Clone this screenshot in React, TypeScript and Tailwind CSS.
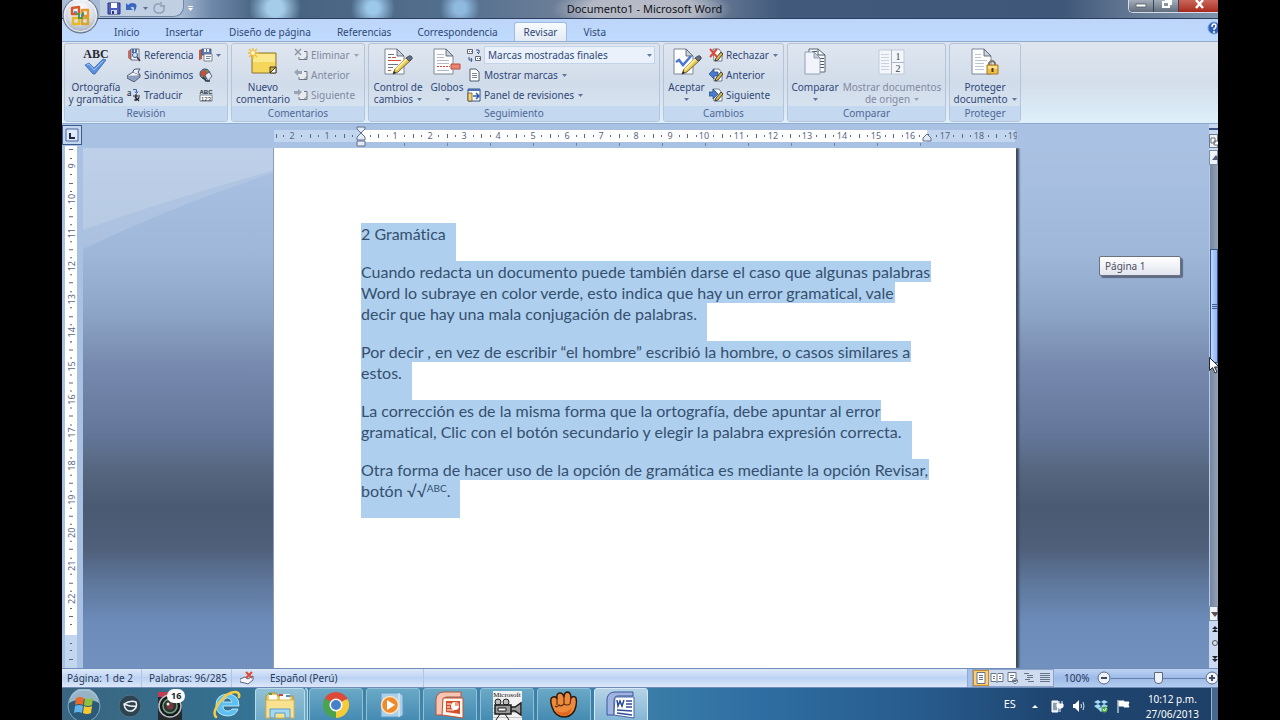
import React from 'react';
import clsx from 'clsx';

const TABS = ['Inicio', 'Insertar', 'Diseño de página', 'Referencias', 'Correspondencia', 'Revisar', 'Vista'];

const PARAGRAPHS = [
  ['2 Gramática'],
  [
    'Cuando redacta un documento puede también darse el caso que algunas palabras',
    'Word lo subraye en color verde, esto indica que hay un error gramatical, vale',
    'decir que hay una mala conjugación de palabras.',
  ],
  ['Por decir , en vez de escribir “el hombre” escribió la hombre, o casos similares a', 'estos.'],
  [
    'La corrección es de la misma forma que la ortografía, debe apuntar al error',
    'gramatical, Clic con el botón secundario y elegir la palabra expresión correcta.',
  ],
  ['Otra forma de hacer uso de la opción de gramática es mediante la opción Revisar,', 'botón √√'],
];

function Caret({ className }: { className?: string }) {
  return (
    <svg viewBox="0 0 5 3" className={clsx('inline-block w-[5px] h-[3px] shrink-0', className)}>
      <path d="M0 0h5L2.5 3z" fill="currentColor" />
    </svg>
  );
}

function Icon({ size = 14, children }: { size?: number; children: React.ReactNode }) {
  return (
    <svg width={size} height={size} viewBox={`0 0 ${size} ${size}`} className="shrink-0">
      {children}
    </svg>
  );
}

/* ---------- ribbon drawings ---------- */

function Sheet({ x = 2, y = 1, w = 19, h = 25 }: { x?: number; y?: number; w?: number; h?: number }) {
  return (
    <g>
      <path d={`M${x} ${y}h${w - 7}l7 7v${h - 7}h-${w}z`} fill="#fdfdfe" stroke="#7c8696" />
      <path d={`M${x + w - 7} ${y}v7h7z`} fill="#c9d2df" stroke="#4f5866" strokeWidth=".8" />
    </g>
  );
}

function Pencil() {
  return (
    <g>
      <path d="M10 26l2-5L24 9l4 3-13 12z" fill="#e6c84e" stroke="#5d5540" strokeWidth=".9" />
      <path d="M12 21l12-12 1.500 1.200L13.500 22.500z" fill="#fff0a0" />
      <path d="M23 10l3-2q2-1 3 1t-1 3l-2 1z" fill="#667086" stroke="#39404e" strokeWidth=".8" />
      <path d="M10 26l1-3 2 2z" fill="#222" />
    </g>
  );
}

const SpellingIcon = () => (
  <svg width="30" height="28" viewBox="0 0 30 28">
    <text x="15" y="10" textAnchor="middle" fontSize="12" fontWeight="bold" fontFamily="Liberation Serif, serif" fill="#262a33">
      ABC
    </text>
    <path d="M4 17l4-2 5 5L22 11l3 1-11 14h-2z" fill="#5b8fe0" stroke="#3a68b4" strokeWidth=".8" />
    <path d="M6 17l2-1 5 6 9-9" fill="none" stroke="#a5c6f6" />
  </svg>
);

const NoteIcon = () => (
  <svg width="30" height="28" viewBox="0 0 30 28">
    <path d="M4 5h24v20H4z" fill="#f4d75a" stroke="#8c7430" />
    <path d="M5 6h22v8H5z" fill="#fbe88a" />
    <path d="M28 19v6h-6z" fill="#fff" stroke="#3d3620" />
    <path d="M22 19h6l-6 6z" fill="#d2b23c" stroke="#3d3620" />
    <path d="M5 0v11M0 5h11M1 1l8 8M9 1L1 9" stroke="#f3b932" strokeWidth="1.400" />
    <circle cx="5" cy="5" r="2" fill="#fff7c0" />
  </svg>
);

const TrackIcon = () => (
  <svg width="30" height="28" viewBox="0 0 30 28">
    <Sheet />
    <path d="M5 6.500h6M5 9.500h3M5 16.500h10M5 19.500h5" stroke="#6b7686" />
    <path d="M5 12.500h13M9 9.500h4M5 22.500h3" stroke="#d0503c" />
    <Pencil />
  </svg>
);

const BalloonIcon = () => (
  <svg width="30" height="28" viewBox="0 0 30 28">
    <Sheet />
    <path d="M5 6.500h7M5 9.500h7M5 12.500h12M5 15.500h12M5 22.500h12" stroke="#b3bbc8" />
    <path d="M5 18.500h13" stroke="#cc4b3c" strokeDasharray="2 1" />
    <path d="M19 16h9v5h-9z" fill="#ea8574" stroke="#bd4c3c" />
  </svg>
);

const AcceptIcon = () => (
  <svg width="30" height="28" viewBox="0 0 30 28">
    <Sheet />
    <path d="M4 14l3-2 4 5 8-9" fill="none" stroke="#4a78d0" strokeWidth="2.500" />
    <Pencil />
  </svg>
);

const CompareIcon = () => (
  <svg width="30" height="28" viewBox="0 0 30 28">
    <path d="M9 1h9l7 6v17H9z" fill="#f8fafc" stroke="#5b6675" />
    <path d="M18 1v6h7M12 3.500h5M20 10.500h4M20 13.500h4M20 16.500h4M20 19.500h4" fill="none" stroke="#4b5563" />
    <path d="M5 4h9l6 6v16H5z" fill="#f1f5fb" stroke="#93a0b5" />
    <path d="M14 4v6h6z" fill="#c4cfdf" stroke="#8290a6" strokeWidth=".8" />
  </svg>
);

const SourceDocsIcon = () => (
  <svg width="30" height="28" viewBox="0 0 30 28">
    <path d="M2 2h25v24H2z" fill="#f3f6fa" stroke="#c2cbd8" />
    <path d="M14.500 2v24M14 14.500h13" stroke="#a9b4c4" />
    <path d="M4 6.500h8M4 9.500h8M4 12.500h8M4 15.500h8M4 18.500h8M4 21.500h8" stroke="#c9d1dd" />
    <text x="21" y="12" textAnchor="middle" fontSize="10" fontFamily="Liberation Serif, serif" fill="#3d4552">
      1
    </text>
    <text x="21" y="24" textAnchor="middle" fontSize="10" fontFamily="Liberation Serif, serif" fill="#3d4552">
      2
    </text>
  </svg>
);

const ProtectIcon = () => (
  <svg width="30" height="28" viewBox="0 0 30 28">
    <Sheet />
    <path d="M5 6.500h6M5 9.500h6M5 12.500h12M5 15.500h9M5 18.500h9M5 21.500h9" stroke="#bdc5d1" />
    <path d="M19 18v-3q3-4 6 0v3" fill="none" stroke="#7c7868" strokeWidth="2" />
    <path d="M17 17h11v9H17z" fill="#efbf45" stroke="#a5762a" />
    <path d="M18 18h9v3h-9z" fill="#fbe08a" />
    <path d="M21.500 20h2v4h-2z" fill="#4e3a12" />
  </svg>
);

const ResearchIcon = () => (
  <Icon>
    <path d="M1 3l3-2v11l-3-2z" fill="#c86b5e" />
    <path d="M4 1h8v11H4z" fill="#f2f5fa" stroke="#46536b" strokeWidth=".8" />
    <path d="M5 1h2v4H5zM8 1h2v3H8z" fill="#4a6fb4" />
    <circle cx="8" cy="7" r="2.500" fill="#cfe4fb" stroke="#3c5a90" />
    <path d="M10 9l3 4" stroke="#3d3d45" strokeWidth="1.500" />
  </Icon>
);

const ThesaurusIcon = () => (
  <Icon>
    <path d="M0 8l6-4 7 3-6 5z" fill="#f7f9fc" stroke="#3a4560" strokeWidth=".9" />
    <path d="M0 8v2l7 4 6-5V7" fill="#8ea2c4" stroke="#3a4560" strokeWidth=".8" />
    <path d="M6 4q0-3 3-3h4L11 4l2 3" fill="#e7eefa" stroke="#3a4560" strokeWidth=".9" />
    <path d="M3 8l5 2" stroke="#8995ab" />
  </Icon>
);

const TranslateIcon = () => (
  <Icon>
    <text x="0" y="8" fontSize="10" fontFamily="Liberation Serif, serif" fill="#16203a">
      a
    </text>
    <path d="M6 1.500h3.500v3M8 3.500l1.500 2 1.500-2" fill="none" stroke="#3864b0" />
    <path d="M6 8h7M9 6v7M7 12q5 0 5-3M8 9l4 4" fill="none" stroke="#22252d" strokeWidth="1.200" />
  </Icon>
);

const TipIcon = () => (
  <Icon>
    <path d="M0 2l3-1v10l-3 1z" fill="#b5604f" />
    <path d="M3 1h9v6H3z" fill="#5a7cba" stroke="#44506a" strokeWidth=".8" />
    <path d="M5 1h2v3H5zM8 1h2v3H8z" fill="#edf2fb" />
    <path d="M5 6h8v7H5z" fill="#fbfcfe" stroke="#5d6a80" strokeWidth=".8" />
    <path d="M7 8.500h5M7 10.500h4" stroke="#7a879b" />
  </Icon>
);

const LanguageIcon = () => (
  <Icon>
    <circle cx="6" cy="6" r="5" fill="#5d9a6a" stroke="#33506e" />
    <path d="M2 4q4-4 6 0t-4 5q-3-1-2-5z" fill="#c94f3d" />
    <path d="M6 7l4-3 3 4-4 5z" fill="#e6edf8" stroke="#3d4a64" strokeWidth=".8" />
    <path d="M4 9l3 4h4" fill="none" stroke="#2c3444" strokeWidth="1.500" />
  </Icon>
);

const CountIcon = () => (
  <Icon>
    <text x="7" y="6" textAnchor="middle" fontSize="6" fontWeight="bold" fontFamily="Liberation Sans, sans-serif" fill="#22262e">
      ABC
    </text>
    <path d="M1 7h12v6H1z" fill="#fff" stroke="#5c6676" strokeWidth=".8" />
    <text x="7" y="13" textAnchor="middle" fontSize="6" fontFamily="Liberation Sans, sans-serif" fill="#22262e">
      123
    </text>
  </Icon>
);

function CommentIcon({ kind }: { kind: 'delete' | 'prev' | 'next' }) {
  return (
    <Icon>
      <path d="M5 3h8v9H5z" fill="#e8ebf0" />
      <path d="M10 3.500h3v8H5V9" fill="none" stroke="#6e7683" />
      <path d="M10 11.500l3-3" stroke="#6e7683" />
      {kind === 'delete' && <path d="M1 1l6 6M7 1L1 7" stroke="#8f97a4" strokeWidth="1.500" />}
      {kind === 'prev' && <path d="M0 4l4-3v2h4v3H4v2z" fill="#9aa3b1" />}
      {kind === 'next' && <path d="M8 4L4 1v2H0v3h4v2z" fill="#9aa3b1" />}
    </Icon>
  );
}

const MarkupViewIcon = () => (
  <Icon>
    <path d="M.5 1.500h5v4h-5zM8.500 8.500h5v4h-5z" fill="#fff" stroke="#5c6679" />
    <path d="M2 3.500h1M4 3.500h1M10 10.500h1M12 10.500h1" stroke="#5c6679" />
    <path d="M9 2h3v3M10 4l2 2M2 9v3h3M4 10l1 2-1 2" fill="none" stroke="#35508a" />
  </Icon>
);

const ShowMarkupIcon = () => (
  <Icon>
    <path d="M3 1h6l3 3v9H3z" fill="#fff" stroke="#4f5a6c" />
    <path d="M5 5.500h5M5 7.500h5M5 9.500h5" stroke="#7b8799" />
  </Icon>
);

const PaneIcon = () => (
  <Icon>
    <path d="M1 1h12v12H1z" fill="#fff" stroke="#33507f" />
    <path d="M1 1h12v2H1z" fill="#4a6fb4" />
    <path d="M1 5h4v8H1z" fill="#f1d370" stroke="#6b5a2a" strokeWidth=".8" />
    <path d="M6 8h5M9 5l3 3-3 3" fill="none" stroke="#2e5db0" strokeWidth="1.500" />
  </Icon>
);

function ChangeIcon({ kind }: { kind: 'reject' | 'prev' | 'next' }) {
  return (
    <Icon>
      <path d="M4 1h6l3 4v8H5z" fill="#f8fafc" stroke="#596477" strokeWidth=".8" />
      <path d="M6 13l1-3 5-6 2 2-5 6z" fill="#d9b64a" stroke="#37332a" strokeWidth=".9" />
      {kind === 'reject' && <path d="M1 1l7 8M8 1L1 9" stroke="#d94a3c" strokeWidth="2" />}
      {kind === 'prev' && <path d="M0 6l5-5v3h4v4H5v3z" fill="#4a7ccc" stroke="#2c508e" strokeWidth=".8" />}
      {kind === 'next' && <path d="M9 6L4 1v3H0v4h4v3z" fill="#4a7ccc" stroke="#2c508e" strokeWidth=".8" />}
    </Icon>
  );
}

/* ---------- ribbon building blocks ---------- */

function Group({ title, className, children }: { title: string; className: string; children: React.ReactNode }) {
  return (
    <section
      className={clsx(
        'flex flex-col shrink-0 rounded-[3px] border border-[#b4c4da] bg-linear-to-b from-[#dfe6f0] via-[#d1dcea] to-[#dbe6f3] overflow-hidden',
        className,
      )}
    >
      <div className="flex flex-1 pt-px">{children}</div>
      <h2 className="h-[15px] bg-[#c4d8f0] text-center leading-[15px] text-[#4f6894]">{title}</h2>
    </section>
  );
}

function BigButton({ icon, lines, caret, disabled, className }: {
  icon: React.ReactNode;
  lines: string[];
  caret?: boolean;
  disabled?: boolean;
  className: string;
}) {
  return (
    <button
      disabled={disabled}
      className={clsx('flex flex-col items-center shrink-0 pt-[3px] leading-[12px] whitespace-nowrap', disabled && 'text-[#8189a0]', className)}
    >
      <span className="mb-[5px]">{icon}</span>
      <span>{lines[0]}</span>
      <span className="flex h-3 items-center gap-1">
        {lines[1]}
        {caret && <Caret className="opacity-70" />}
      </span>
    </button>
  );
}

function SmallButton({ icon, label, caret, disabled }: {
  icon: React.ReactNode;
  label: string;
  caret?: boolean;
  disabled?: boolean;
}) {
  return (
    <button disabled={disabled} className={clsx('flex h-5 items-center gap-[3px] whitespace-nowrap', disabled && 'text-[#8189a0]')}>
      {icon}
      <span>{label}</span>
      {caret && <Caret className="ml-px opacity-70" />}
    </button>
  );
}

function Ribbon() {
  return (
    <div className="flex h-[83px] shrink-0 gap-[3px] border-y border-[#8fabd0] bg-linear-to-b from-[#dfe5ee] via-[#d3deea] to-[#def0fb] p-px pl-[2px]">
      <Group title="Revisión" className="w-[164px]">
        <BigButton icon={<SpellingIcon />} lines={['Ortografía', 'y gramática']} className="w-[62px]" />
        <div className="flex w-[72px] flex-col">
          <SmallButton icon={<ResearchIcon />} label="Referencia" />
          <SmallButton icon={<ThesaurusIcon />} label="Sinónimos" />
          <SmallButton icon={<TranslateIcon />} label="Traducir" />
        </div>
        <div className="flex flex-col">
          <button aria-label="Sugerencia de traducción" className="flex h-5 items-center gap-[3px]">
            <TipIcon />
            <Caret className="opacity-70" />
          </button>
          <button aria-label="Establecer idioma" className="flex h-5 items-center">
            <LanguageIcon />
          </button>
          <button aria-label="Contar palabras" className="flex h-5 items-center">
            <CountIcon />
          </button>
        </div>
      </Group>

      <Group title="Comentarios" className="w-[134px]">
        <BigButton icon={<NoteIcon />} lines={['Nuevo', 'comentario']} className="w-[62px]" />
        <div className="flex flex-col">
          <SmallButton icon={<CommentIcon kind="delete" />} label="Eliminar" caret disabled />
          <SmallButton icon={<CommentIcon kind="prev" />} label="Anterior" disabled />
          <SmallButton icon={<CommentIcon kind="next" />} label="Siguiente" disabled />
        </div>
      </Group>

      <Group title="Seguimiento" className="w-[292px]">
        <BigButton icon={<TrackIcon />} lines={['Control de', 'cambios']} caret className="w-[58px]" />
        <BigButton icon={<BalloonIcon />} lines={['Globos']} caret className="w-[40px]" />
        <div className="flex flex-1 flex-col">
          <div className="flex h-5 items-center gap-[3px] pr-1">
            <MarkupViewIcon />
            <div className="relative flex-1">
              <select
                aria-label="Mostrar para revisión"
                className="h-[18px] w-full appearance-none border border-[#c3d3e8] bg-[#eaf1fa] pl-[3px] outline-none"
              >
                <option>Marcas mostradas finales</option>
                <option>Final</option>
                <option>Original</option>
              </select>
              <Caret className="pointer-events-none absolute right-[3px] top-2 opacity-70" />
            </div>
          </div>
          <SmallButton icon={<ShowMarkupIcon />} label="Mostrar marcas" caret />
          <SmallButton icon={<PaneIcon />} label="Panel de revisiones" caret />
        </div>
      </Group>

      <Group title="Cambios" className="w-[121px]">
        <BigButton icon={<AcceptIcon />} lines={['Aceptar']} caret className="w-[45px]" />
        <div className="flex flex-col">
          <SmallButton icon={<ChangeIcon kind="reject" />} label="Rechazar" caret />
          <SmallButton icon={<ChangeIcon kind="prev" />} label="Anterior" />
          <SmallButton icon={<ChangeIcon kind="next" />} label="Siguiente" />
        </div>
      </Group>

      <Group title="Comparar" className="w-[159px]">
        <BigButton icon={<CompareIcon />} lines={['Comparar']} caret className="w-[54px]" />
        <BigButton icon={<SourceDocsIcon />} lines={['Mostrar documentos', 'de origen']} caret disabled className="w-[100px]" />
      </Group>

      <Group title="Proteger" className="w-[72px]">
        <BigButton icon={<ProtectIcon />} lines={['Proteger', 'documento']} caret className="flex-1" />
      </Group>
    </div>
  );
}

/* ---------- title bar and tabs ---------- */

function OfficeButton() {
  return (
    <button aria-label="Botón de Office" className="absolute left-0 top-[-3px] z-10">
      <svg width="38" height="38" viewBox="0 0 38 38">
        <defs>
          <radialGradient id="orb" cx=".5" cy=".3" r=".75">
            <stop offset="0" stopColor="#ffffff" />
            <stop offset=".6" stopColor="#d4dae4" />
            <stop offset="1" stopColor="#8f9bb0" />
          </radialGradient>
        </defs>
        <circle cx="18.500" cy="18.500" r="17.500" fill="url(#orb)" stroke="#5f6d84" />
        <circle cx="18.500" cy="18.500" r="16" fill="none" stroke="#fff" strokeOpacity=".8" />
        <g fill="none" strokeWidth="2.500" strokeLinejoin="round">
          <path d="M10 11l7-1v7h-7z" stroke="#d9582a" />
          <path d="M20 13h6v6h-6z" stroke="#e9962c" />
          <path d="M11 21h6v6h-6z" stroke="#e9b92a" />
          <path d="M20 21h6v6h-6z" stroke="#d9a52c" />
        </g>
        <path d="M14 17h3v4h4M21 15v4" fill="none" stroke="#4f9a4c" strokeWidth="2" />
        <path d="M12 15h3M20 17v3" stroke="#3f78c4" strokeWidth="1.500" />
      </svg>
    </button>
  );
}

function TitleBar() {
  return (
    <header className="relative flex h-[19px] shrink-0 items-start border-b border-[#2c3f5e] bg-[radial-gradient(circle_at_213px_8px,#a5cdea_0,#a5cdea_8px,transparent_26px),radial-gradient(circle_at_311px_8px,#9cc8ea_0,#9cc8ea_6px,transparent_22px),radial-gradient(circle_at_398px_8px,#8fb9de_0,#8fb9de_6px,transparent_20px),radial-gradient(ellipse_90px_24px_at_580px_9px,#b9bcc8_0,#b3b8c5_60%,transparent),linear-gradient(to_right,#a9bdd6_0,#a5b8d0_120px,#6c87a8_150px,#46617f_200px,#54708f_400px,#6d7f98_500px,#6d7f98_640px,#41597b_720px,#3f5778_1000px,#5f7490_1060px,#7f93ad_100%)]">
      <div className="ml-[38px] flex h-[17px] w-[84px] items-center gap-1 rounded-br-[10px] border-b border-r border-[#7187a8] bg-[#c0cfe2] pl-[7px]">
        <button aria-label="Guardar">
          <Icon>
            <path d="M1 2h12v11H1z" fill="#4f5fc0" stroke="#2d3880" />
            <path d="M4 2h6v5H4z" fill="#fff" />
            <path d="M4 9h6v4H4z" fill="#cdd5ea" />
            <path d="M5 10h2v3H5z" fill="#2d3880" />
          </Icon>
        </button>
        <button aria-label="Deshacer" className="flex items-center gap-1">
          <Icon>
            <path d="M1 2v7h7L5.500 6.500Q10 4 9 11q6-9-2-9-2 0-4 2z" fill="#3a66c0" />
          </Icon>
          <Caret className="text-[#5b7096]" />
        </button>
        <button aria-label="Rehacer" disabled>
          <Icon>
            <path d="M8 3H5Q2 4 2 8t5 4 5-4V4M9 1v4h4" fill="none" stroke="#92a0b5" strokeWidth="1.500" />
          </Icon>
        </button>
      </div>
      <button aria-label="Personalizar barra de acceso rápido" className="ml-1 flex h-4 flex-col items-center justify-center gap-px text-white">
        <span className="h-px w-[5px] bg-white" />
        <Caret />
      </button>
      <h1 className="flex-1 pr-8 text-center text-[11px] leading-[18px] text-[#101318]">Documento1 - Microsoft Word</h1>
      <div className="flex h-[13px] w-[90px] overflow-hidden rounded-bl-[5px] border-b border-l border-[#d3deea]">
        <button aria-label="Minimizar" className="w-[25px] border-r border-[#35445a] bg-linear-to-b from-[#a4adb9] to-[#626d7d]">
          <svg width="24" height="12" viewBox="0 0 24 12">
            <path d="M7 4h10v3H7z" fill="#fff" stroke="#4a5361" strokeWidth=".8" />
          </svg>
        </button>
        <button aria-label="Restaurar" className="w-[25px] border-r border-[#35445a] bg-linear-to-b from-[#a4adb9] to-[#626d7d]">
          <svg width="24" height="12" viewBox="0 0 24 12">
            <path d="M9 2h6v5H9zM11 0h6v5" fill="none" stroke="#fff" strokeWidth="2" />
          </svg>
        </button>
        <button aria-label="Cerrar" className="flex-1 bg-linear-to-b from-[#c9665a] to-[#a8281c]">
          <svg width="39" height="12" viewBox="0 0 39 12">
            <path d="M17 0l7 8M24 0l-7 8" stroke="#fff" strokeWidth="2.500" />
          </svg>
        </button>
      </div>
    </header>
  );
}

function TabRow() {
  return (
    <nav className="flex h-[22px] shrink-0 items-end justify-between bg-linear-to-b from-[#bdd5f8] to-[#bfdbff]">
      <div className="flex gap-[6px] pl-[42px]">
        {TABS.map((tab) => (
          <button
            key={tab}
            className={clsx(
              'h-[19px] rounded-t-[3px] border border-b-0 px-[9px]',
              tab === 'Revisar' ? 'border-[#9dbbe0] bg-linear-to-b from-[#f7fafd] to-[#e3ebf5]' : 'border-transparent',
            )}
          >
            {tab}
          </button>
        ))}
      </div>
      <div className="w-[11px] self-center overflow-hidden">
        <button aria-label="Ayuda">
          <Icon>
            <circle cx="7" cy="7" r="6" fill="#2f62b8" stroke="#7fa3dc" />
            <path d="M5 6q0-3 2-3t2 2-2 3v1M7 10v2" fill="none" stroke="#fff" strokeWidth="1.500" />
          </Icon>
        </button>
      </div>
    </nav>
  );
}

/* ---------- rulers and scrollbar ---------- */

const RULER_ZERO = 89;
const units = Array.from({ length: 22 }, (_, i) => i - 2);
const at = (n: number) => Math.round(RULER_ZERO + (n * 103) / 3);

function HorizontalRuler() {
  return (
    <div className="flex shrink-0 justify-center pr-[3px]">
      <svg viewBox="0 0 745 24" className="h-6 w-[745px] shrink-0 text-[#5a6880]">
        <path d="M2 6h741v12H2z" fill="#c3d6f0" />
        <path d={`M${RULER_ZERO} 6h566v12h-566z`} fill="#fff" />
        <g fontSize="9" textAnchor="middle" fill="currentColor">
          {units.filter((n) => n !== 0).map((n) => (
            <text key={n} x={at(n)} y="15">{Math.abs(n)}</text>
          ))}
        </g>
        {units.filter((n) => n > -2).map((n) => (
          <path
            key={n}
            d={`M${at(n - 0.75)} 11v2M${at(n - 0.5)} 10v4M${at(n - 0.25)} 11v2`}
            transform="translate(.5 0)"
            stroke="currentColor"
          />
        ))}
        <path d="M4.500 10v4M11.500 11v2" stroke="currentColor" />
        <g stroke="#7184a2">
          {Array.from({ length: 13 }, (_, i) => (
            <path key={i} d={`M${132 + i * 43}.5 19v3`} />
          ))}
        </g>
        <path d="M85 3h8v2l-4 4-4-4zM89 9l4 4v3h-8v-3zM85 17h8v5h-8z" fill="#e3ebf6" stroke="#5e6f8c" />
        <path d="M655 10l4 4v3h-8v-3z" fill="#e3ebf6" stroke="#5e6f8c" />
      </svg>
    </div>
  );
}

function VerticalRuler() {
  const rows = Array.from({ length: 14 }, (_, i) => i + 9);
  const y = (n: number) => Math.round(20 + ((n - 9) * 133) / 4);
  return (
    <svg viewBox="0 0 21 521" preserveAspectRatio="xMidYMin slice" className="w-[21px] min-h-0 flex-1 text-[#5a6880]">
      <path d="M3 0h12v521H3z" fill="#c3d6f0" />
      <path d="M3 0h12v488H3z" fill="#fff" />
      {rows.map((n) => (
        <g key={n}>
          <text fontSize="9" textAnchor="middle" fill="currentColor" transform={`translate(13 ${y(n)}) rotate(-90)`}>
            {n}
          </text>
          <path d={`M8 ${y(n - 0.25)}.5h2M7 ${y(n - 0.5)}.5h4M8 ${y(n + 0.25)}.5h2`} stroke="currentColor" />
        </g>
      ))}
      <path d="M7 469.500h4M8 477.500h2M8 496.500h2M8 503.500h2M7 512.500h4" stroke="currentColor" />
    </svg>
  );
}

function ScrollColumn() {
  return (
    <div className="flex w-[9px] shrink-0 flex-col overflow-hidden bg-[#c8d9f0]">
      <div className="mt-1 h-[2px] shrink-0 bg-[#3a5688]" />
      <button aria-label="Ver regla" className="mt-1 h-[14px] shrink-0 border border-[#6c7b94] bg-[#eef0f2]">
        <svg width="14" height="12" viewBox="0 0 14 12">
          <path d="M1 3h4v5H1zM4 6h7v4H4z" fill="#fff" stroke="#656b76" />
        </svg>
      </button>
      <button aria-label="Subir" className="mt-[2px] h-[15px] shrink-0 border border-[#7b8daa] bg-[#eef3fa]">
        <svg width="14" height="13" viewBox="0 0 14 13">
          <path d="M2 9l4-5 4 5z" fill="#4d5c78" />
        </svg>
      </button>
      <div className="flex min-h-0 flex-1 flex-col border-l border-[#b6cbe8] bg-linear-to-r from-[#76869e] to-[#94a3b8]">
        <div className="h-[19%]" />
        <div className="relative flex h-[26%] flex-col items-end justify-center gap-px border border-[#36588f] bg-linear-to-r from-[#c0d7fb] to-[#8fb5f0]">
          <span className="h-px w-[5px] bg-[#3e5f96]" />
          <span className="h-px w-[5px] bg-[#3e5f96]" />
          <span className="h-px w-[5px] bg-[#3e5f96]" />
          <svg width="12" height="17" viewBox="0 0 12 17" className="absolute -bottom-3 left-[-2px]">
            <path d="M.5.5v13l3-3 2.500 5.500 2-1-2.500-5H10z" fill="#fff" stroke="#20252e" />
          </svg>
        </div>
      </div>
      <button aria-label="Bajar" className="h-[15px] shrink-0 border border-[#7b8daa] bg-[#eef3fa]">
        <svg width="14" height="13" viewBox="0 0 14 13">
          <path d="M1 5h8l-4 5z" fill="#5c4f55" />
        </svg>
      </button>
      <button aria-label="Página anterior" className="h-[15px] shrink-0">
        <svg width="12" height="15" viewBox="0 0 12 15">
          <path d="M3 8l3-3 3 3zM3 11l3-3 3 3z" fill="#1d2430" />
        </svg>
      </button>
      <button aria-label="Seleccionar objeto de búsqueda" className="h-[15px] shrink-0">
        <svg width="12" height="15" viewBox="0 0 12 15">
          <circle cx="6" cy="7" r="2.500" fill="#d5dbe3" stroke="#4e5765" />
        </svg>
      </button>
      <button aria-label="Página siguiente" className="h-[17px] shrink-0">
        <svg width="12" height="15" viewBox="0 0 12 15">
          <path d="M3 4h6L6 7zM3 7h6l-3 3z" fill="#1d2430" />
        </svg>
      </button>
    </div>
  );
}

/* ---------- document ---------- */

function DocumentArea() {
  return (
    <div className="relative flex min-h-0 flex-1 justify-center overflow-hidden bg-[linear-gradient(to_bottom,#aac1e2_0%,#9fb8da_20%,#8ea7c8_31%,#7789ae_42%,#64779a_55%,#56667f_62%,#4a5a72_69%,#505f7a_77%,#5d7599_83%,#6c8bb8_91%,#7291bf_100%)]">
      <svg width="192" height="104" viewBox="0 0 192 104" className="absolute left-0 top-0">
        <path d="M0 0h192v22Q90 50 0 82z" fill="#fff" opacity=".14" />
        <path d="M0 0h192v24Q90 58 0 101z" fill="#fff" opacity=".12" />
      </svg>
      <article className="relative mr-[3px] w-[743px] border-l border-[#8c9cb8] bg-white pl-[87px] pt-[75px] font-[Lato,'Noto_Sans',sans-serif] text-[16px] leading-[21px] text-[#35506e] shadow-[3px_0_2px_#3c4a60] [font-variant-ligatures:none]">
        {PARAGRAPHS.map((lines, p) => (
          <p key={p}>
            {lines.map((line, i) => (
              <span
                key={i}
                className={clsx('block w-fit whitespace-nowrap bg-[#afcfee]', i === lines.length - 1 ? 'pb-[17px] pr-[10px]' : 'pr-px')}
              >
                {line}
                {line === 'botón √√' && (
                  <>
                    <sup className="text-[10px] leading-none">ABC</sup>.
                  </>
                )}
              </span>
            ))}
          </p>
        ))}
      </article>
      <div
        role="tooltip"
        className="absolute right-[28px] top-[108px] h-5 w-[82px] rounded-[2px] border border-[#6b7280] bg-linear-to-b from-white to-[#e2e5f0] pl-[5px] leading-[18px] text-[#4a4f5c] shadow-[2px_2px_1px_#5c6a84]"
      >
        Página 1
      </div>
    </div>
  );
}

/* ---------- status bar ---------- */

const VIEWS = [
  { label: 'Diseño de impresión', d: 'M3 1h8v11H3zM5 4h4M5 6h4M5 8h4' },
  { label: 'Lectura de pantalla completa', d: 'M7 3v8M1 2h5l1 1 1-1h5v8H8l-1 1-1-1H1zM3 5h2M9 5h2M3 7h2M9 7h2' },
  { label: 'Diseño web', d: 'M2 1h8v9H2zM4 4h4M4 6h3M9 7a2.500 2.500 0 1 0 .1 0zM7 9h5' },
  { label: 'Esquema', d: 'M2 2h5M5 4h6M5 6h6M3 8h5M6 10h6' },
  { label: 'Borrador', d: 'M2 2h10M2 4h10M2 6h10M2 8h10M2 10h10' },
];

function StatusBar() {
  return (
    <footer className="flex h-[20px] shrink-0 items-center border-y border-[#6f8db8] bg-linear-to-b from-[#dfeaf9] via-[#bcd2f3] to-[#dce8f8] text-[#27395a]">
      <span className="w-[79px] pl-[5px]">Página: 1 de 2</span>
      <span className="h-full w-[91px] border-x border-[#b0c6e6] pl-[7px] leading-[18px]">Palabras: 96/285</span>
      <button aria-label="Errores de revisión" className="mx-2">
        <Icon>
          <path d="M0 8l5-2 3 2 5-3v4l-5 4-3-1-5-1z" fill="#f5f7fb" stroke="#4a5878" strokeWidth=".9" />
          <path d="M6 1l6 6M12 1L6 7" stroke="#dc4a3a" strokeWidth="2" />
        </Icon>
      </button>
      <button className="h-full w-[162px] border-r border-[#b0c6e6] pl-2 text-left">Español (Perú)</button>
      <span className="ml-auto h-full border-l border-[#8ea9d2] bg-[#a5c0ea] pr-1" />
      <div className="flex h-full flex-1 max-w-[246px] items-center bg-linear-to-b from-[#bcd2f2] via-[#9dbbe8] to-[#b4cdf0]">
        <div className="flex border border-[#8aa4cc] bg-[#cfdcf0]">
          {VIEWS.map((view, i) => (
            <button
              key={view.label}
              aria-label={view.label}
              className={clsx('h-4 w-4 border', i === 0 ? 'border-[#c48a30] bg-[#fbcf74]' : 'border-transparent')}
            >
              <svg width="14" height="14" viewBox="0 0 14 14">
                <path d={view.d} transform="translate(0 .5)" fill={i < 3 ? '#fff' : 'none'} stroke="#66738a" />
              </svg>
            </button>
          ))}
        </div>
        <button className="ml-[10px]">100%</button>
        <button aria-label="Alejar" className="ml-2 shrink-0">
          <Icon>
            <circle cx="7" cy="7" r="6" fill="#eef3fa" stroke="#5d6b82" />
            <path d="M4 7h6" stroke="#3f4c62" strokeWidth="2" />
          </Icon>
        </button>
        <input
          type="range"
          aria-label="Zoom"
          defaultValue={50}
          className="h-[14px] w-[94px] appearance-none bg-[linear-gradient(#6580ad,#6580ad)] bg-[length:100%_1px] bg-center bg-no-repeat [&::-webkit-slider-thumb]:h-[12px] [&::-webkit-slider-thumb]:w-[9px] [&::-webkit-slider-thumb]:appearance-none [&::-webkit-slider-thumb]:rounded-b-[4px] [&::-webkit-slider-thumb]:border [&::-webkit-slider-thumb]:border-[#5d6b82] [&::-webkit-slider-thumb]:bg-[#eef3fa]"
        />
        <button aria-label="Acercar" className="shrink-0">
          <Icon>
            <circle cx="7" cy="7" r="6" fill="#eef3fa" stroke="#5d6b82" />
            <path d="M4 7h6M7 4v6" stroke="#3f4c62" strokeWidth="2" />
          </Icon>
        </button>
      </div>
    </footer>
  );
}

/* ---------- taskbar ---------- */

const StartOrb = () => (
  <svg width="34" height="34" viewBox="0 0 34 34">
    <circle cx="17" cy="17" r="16" fill="#2c5a78" stroke="#7fa9c0" />
    <path d="M2 14a15 15 0 0 1 30 0Q17 6 2 14z" fill="#b9d3e0" opacity=".75" />
    <path d="M9 9q4-2 8 0l-1 7q-4-2-8 0z" fill="#e8692c" />
    <path d="M18 9q4 2 8 0l-1 7q-4 2-8 0z" fill="#8fc040" />
    <path d="M8 17q4-2 8 0l-1 7q-4-2-8 0z" fill="#5fb4ec" />
    <path d="M17 17q4 2 8 0l-1 7q-4 2-8 0z" fill="#fac82e" />
  </svg>
);

const RoundIcon = () => (
  <svg width="26" height="34" viewBox="0 0 26 34">
    <circle cx="13" cy="17" r="11" fill="#2d4350" stroke="#4d7388" />
    <path d="M7 15q6-4 12-2 2 6-4 9-7 1-8-7zM7 15q7 3 12 2" fill="none" stroke="#eef3f6" strokeWidth="1.500" />
  </svg>
);

const CameraIcon = () => (
  <svg width="28" height="34" viewBox="0 0 28 34">
    <path d="M2 3h24v28H2z" fill="#25282d" />
    <path d="M2 3h12v5H2z" fill="#c23c54" />
    <circle cx="14" cy="17" r="11" fill="#15181b" stroke="#b8c0c4" strokeWidth="1.500" />
    <circle cx="14" cy="17" r="7" fill="#27372f" stroke="#79a084" strokeWidth="1.500" />
    <circle cx="14" cy="17" r="3.500" fill="#7a3640" />
    <circle cx="12" cy="15" r="1.500" fill="#e6f4ea" />
  </svg>
);

const ExplorerEIcon = () => (
  <svg width="30" height="32" viewBox="0 0 30 32">
    <path
      fillRule="evenodd"
      d="M26 21q-2 7-11 7Q4 27 4 17T15 6q12 0 12 12H11q0 5 5 5 3 0 4-2zM11 14h9q-1-4-4.500-4T11 14z"
      fill="#5cc1f2"
      stroke="#d8f2fd"
      strokeWidth=".8"
    />
    <path
      d="M4 29Q0 25 7 15 16 3 24 4q4 1 3 5"
      fill="none"
      stroke="#f5cd45"
      strokeWidth="2.500"
      strokeLinecap="round"
    />
  </svg>
);

const FolderIcon = () => (
  <svg width="32" height="32" viewBox="0 0 32 32">
    <path d="M2 6l3-3h7l2 3h15v22H2z" fill="#eccb62" stroke="#b4913a" />
    <path d="M5 5h8v5H5zM16 4h10v6H16z" fill="#fff" />
    <path d="M5 3h3v2H5z" fill="#4ca254" />
    <path d="M15 4h4v2h-4z" fill="#c94a44" />
    <path d="M22 5h4v2h-4z" fill="#4b8ad0" />
    <path d="M2 10h28v18H2z" fill="#f8e290" stroke="#d6b456" />
    <path d="M6 28v-9h20v9h-5v-5H11v5z" fill="#a4d7f2" stroke="#5b9cc6" />
  </svg>
);

const ChromeIcon = () => (
  <svg width="28" height="32" viewBox="0 0 28 32">
    <path d="M14 16L2.700 9.500A13 13 0 0 1 25.300 9.500z" fill="#dd4a38" />
    <path d="M14 16L25.300 9.500A13 13 0 0 1 14 29z" fill="#f6cb37" />
    <path d="M14 16v13A13 13 0 0 1 2.700 9.500z" fill="#4ba24f" />
    <path d="M14 9.500h11.300" stroke="#dd4a38" strokeWidth="2" />
    <circle cx="14" cy="16" r="6.500" fill="#fff" />
    <circle cx="14" cy="16" r="5" fill="#4580c8" />
  </svg>
);

const PlayerIcon = () => (
  <svg width="30" height="32" viewBox="0 0 30 32">
    <path d="M3 4h18l4 2v20l-3 2H3z" fill="#a9d0ea" stroke="#5f9ac4" />
    <path d="M21 4v24" stroke="#e8f5fd" />
    <circle cx="12" cy="16" r="8.500" fill="#ee8a2c" stroke="#fbe4c6" strokeWidth="1.500" />
    <path d="M9 11l8 5-8 5z" fill="#fff" />
  </svg>
);

const PowerPointIcon = () => (
  <svg width="32" height="32" viewBox="0 0 32 32">
    <path d="M2 26V10q1-7 8-7h17v5H13q-4 0-4 5v13z" fill="#f5c6b4" stroke="#b8563a" />
    <path d="M9 9h20v20l-21-3z" fill="#fff4ee" stroke="#c2532f" />
    <path d="M12 12h14v13l-14-2z" fill="#d5502a" />
    <circle cx="21" cy="17" r="4" fill="#fff" />
    <path d="M21 17v-4a4 4 0 0 1 4 4z" fill="#f0a082" />
    <path d="M13 15h4M13 18h3M13 21h7" stroke="#fff" />
  </svg>
);

const MovieCamIcon = () => (
  <svg width="32" height="34" viewBox="0 0 32 34">
    <path d="M2 2h29v32H2z" fill="#f2f2f2" />
    <text x="16" y="8" textAnchor="middle" fontSize="7" fontFamily="Liberation Serif, serif" fill="#111">
      Microsoft
    </text>
    <path d="M2 19.500h29M2 23.500h29M2 28.500h29" stroke="#c4c4c4" />
    <circle cx="7" cy="13" r="3" fill="#bbb" stroke="#222" />
    <circle cx="15" cy="13" r="3" fill="#bbb" stroke="#222" />
    <path d="M4 16h16v9H4zM20 18h4l6-4v12l-6-4h-4z" fill="#9b9b9b" stroke="#1c1c1c" strokeWidth="1.500" />
    <path d="M7 19h8v3H7zM9 25l-4 6M14 25l4 6" fill="#fff" stroke="#1c1c1c" />
  </svg>
);

const PawIcon = () => (
  <svg width="30" height="32" viewBox="0 0 30 32">
    <path
      d="M3 18Q0 9 4 8q3-1 4 2-1-6 3-6 3 0 4 4 0-5 4-5 3 1 3 6 3-3 5 0 1 3 0 8-2 10-11 11Q6 28 3 18z"
      fill="#ee8a3c"
      stroke="#2a1a10"
      strokeWidth="1.500"
    />
    <path d="M8 10v6M15 8v7M22 9l-1 6M6 17q2 2 4-1 2 2 5-1 3 2 6 0" fill="none" stroke="#5e2a12" strokeWidth="1.200" />
    <path d="M7 21q7 6 16-2-1 7-8 8-6 0-8-6z" fill="#e2681e" />
  </svg>
);

const WordIcon = () => (
  <svg width="32" height="32" viewBox="0 0 32 32">
    <path d="M2 26V10q1-7 8-7h18v4H13q-4 0-4 5v14z" fill="#9fb4e0" stroke="#3d559c" />
    <path d="M10 8h19v21l-20-3z" fill="#fff" stroke="#4d64a4" />
    <path d="M12 11l1 6 2-5 2 5 2-6" fill="none" stroke="#2a4694" strokeWidth="1.500" />
    <path d="M21 12h6M21 15h6M21 18h6M12 21l15 1M12 24l15 2" stroke="#2f4c9c" strokeWidth="1.500" />
  </svg>
);

const TASKS = [
  { label: 'Google Chrome', icon: <ChromeIcon /> },
  { label: 'Reproductor de Windows Media', icon: <PlayerIcon /> },
  { label: 'Microsoft PowerPoint', icon: <PowerPointIcon /> },
  { label: 'Movie Maker', icon: <MovieCamIcon /> },
  { label: 'Mano', icon: <PawIcon /> },
  { label: 'Microsoft Word', icon: <WordIcon />, active: true },
];

const TRAY = [
  { label: 'Mostrar iconos ocultos', art: <path d="M4 9h6L7 6z" fill="#fff" /> },
  {
    label: 'Energía',
    art: (
      <>
        <path d="M2 2h6v11H2z" fill="#dfe6ec" stroke="#fff" />
        <path d="M4 4v7M6 4v7" stroke="#3b5878" />
        <path d="M9 2v3M12 2v3M7 5h6v3q-3 3-6 0zM10 10v3" fill="#fff" stroke="#fff" />
      </>
    ),
  },
  {
    label: 'Volumen',
    art: (
      <>
        <path d="M1 5h2l4-4v12L3 9H1z" fill="#fff" />
        <path d="M9 5q1 2 0 4M11 3q2 4 0 8" fill="none" stroke="#dce6f0" />
      </>
    ),
  },
  {
    label: 'Dropbox',
    art: (
      <>
        <path d="M4 1l3 2-3 2-4-2zM10 1l4 2-4 2-3-2zM4 5l3 2-3 3-4-3zM10 5l4 2-4 3-3-3zM4 10l3-2 3 2-3 3z" fill="#a6dcfa" />
        <circle cx="10.500" cy="10.500" r="3" fill="#4fae45" />
        <path d="M9 10l1.500 2 2-3" fill="none" stroke="#fff" />
      </>
    ),
  },
  {
    label: 'Centro de actividades',
    art: <path d="M2 1v13M3 2h5v1h5l-1 3 1 2H8V7H3z" fill="#fff" stroke="#fff" />,
  },
];

function Taskbar() {
  return (
    <div className="flex h-8 shrink-0 overflow-hidden bg-[linear-gradient(to_right,#3a6580_0%,#34708f_14%,#4186a8_28%,#3a7ea8_50%,#2f6ea2_60%,#275a8c_75%,#1f4671_85%,#1d4068_100%)]">
      <button aria-label="Inicio" className="flex w-[44px] shrink-0 items-start justify-center pt-px">
        <StartOrb />
      </button>
      <button aria-label="Conexión" className="flex w-12 shrink-0 items-start justify-center pt-px">
        <RoundIcon />
      </button>
      <button aria-label="Cámara" className="relative flex w-8 shrink-0 items-start justify-center pt-px">
        <CameraIcon />
        <span className="absolute left-[13px] top-px rounded-full bg-white px-1 text-[9px] font-bold leading-[14px] text-[#20242b]">16</span>
      </button>
      <button aria-label="Internet Explorer" className="ml-[14px] flex w-[54px] shrink-0 items-start justify-center">
        <ExplorerEIcon />
      </button>
      <button
        aria-label="Explorador de Windows"
        className="ml-px flex h-9 w-[50px] shrink-0 items-start justify-center rounded-t-[3px] border border-[#b8dbea] bg-linear-to-b from-[#93c1d6] to-[#6aa7c4] pt-px"
      >
        <FolderIcon />
      </button>
      <span className="mr-px h-9 w-[3px] shrink-0 rounded-tr-[3px] border-r border-t border-[#b8dbea] bg-[#6aa7c4]" />
      <div className="flex gap-[3px]">
        {TASKS.map((task) => (
          <button
            key={task.label}
            aria-label={task.label}
            className={clsx(
              'flex h-9 w-[54px] shrink-0 items-start justify-center rounded-t-[3px] border',
              task.active
                ? 'border-[#d4e9f5] bg-linear-to-b from-[#b5d3e6] to-[#7fb3d3]'
                : 'border-[#8fc0d8] bg-linear-to-b from-[#6aa9c6] to-[#4188b0]',
            )}
          >
            {task.icon}
          </button>
        ))}
      </div>
      <div className="ml-auto flex items-start text-white">
        <span className="pr-3 pt-[9px] text-[11px] leading-[14px]">ES</span>
        <div className="flex gap-2 pr-4 pt-[11px]">
          {TRAY.map((item) => (
            <button key={item.label} aria-label={item.label}>
              <Icon>{item.art}</Icon>
            </button>
          ))}
        </div>
        <button className="mr-3 pt-1 text-center leading-[15px] whitespace-nowrap">
          10:12 p.m.
          <br />
          27/06/2013
        </button>
        <button aria-label="Mostrar escritorio" className="h-9 w-[7px] border-l border-[#9db4cc] bg-[#46688c]" />
      </div>
    </div>
  );
}

export default function App() {
  return (
    <div className="h-screen overflow-hidden bg-black px-[62px]">
      <div className="relative flex h-full flex-col overflow-hidden font-['Noto_Sans',sans-serif] text-[10px] text-[#2f4878]">
        <OfficeButton />
        <TitleBar />
        <TabRow />
        <Ribbon />
        <main className="flex min-h-0 flex-1 bg-[#a9c1e2]">
          <div className="flex w-[21px] shrink-0 flex-col">
            <button aria-label="Tabulación izquierda" className="my-px flex h-5 w-5 shrink-0 items-center justify-center border border-[#3d5a8e] bg-[#c3d6f0]">
              <svg width="14" height="14" viewBox="0 0 14 14">
                <path d="M1 1h12v12H1z" fill="#dfe9f7" stroke="#4a659a" />
                <path d="M5 5v5h5" fill="none" stroke="#1d2a48" strokeWidth="2" />
              </svg>
            </button>
            <VerticalRuler />
          </div>
          <div className="flex min-w-0 flex-1 flex-col">
            <HorizontalRuler />
            <DocumentArea />
          </div>
          <ScrollColumn />
        </main>
        <StatusBar />
        <Taskbar />
      </div>
    </div>
  );
}
